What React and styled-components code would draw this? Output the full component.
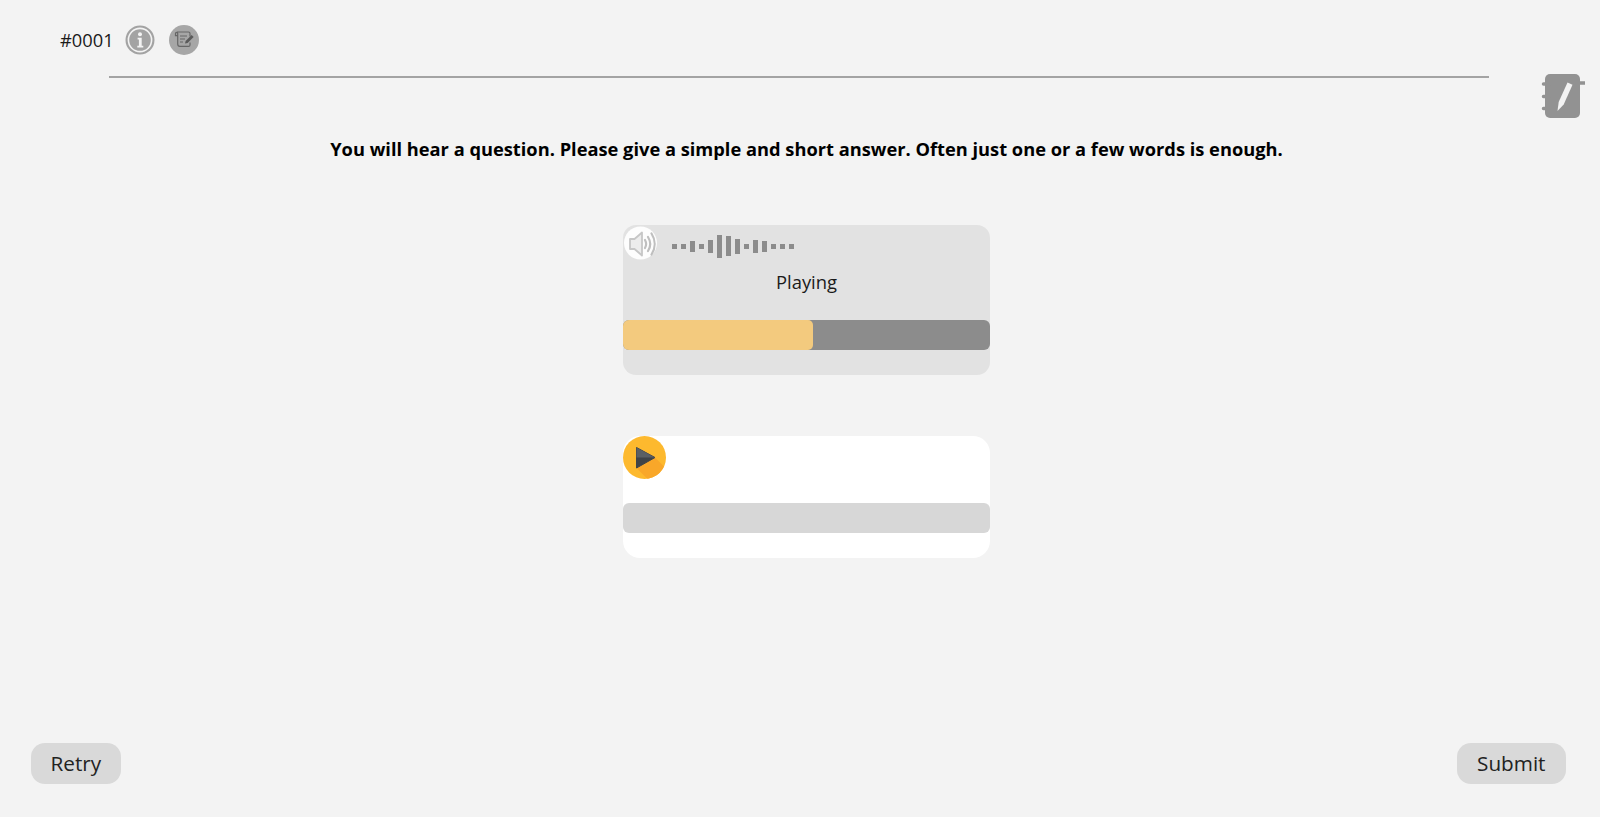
import React from 'react';
import styled, { createGlobalStyle } from 'styled-components';

const GlobalStyle = createGlobalStyle`
  html, body {
    margin: 0;
    padding: 0;
    height: 100%;
    background: #f3f3f3;
    font-family: "Open Sans", "Liberation Sans", sans-serif;
  }
`;

const Page = styled.div`
  position: relative;
  display: flex;
  flex-direction: column;
  height: 100vh;
  overflow: hidden;
  background: #f3f3f3;
  color: #111;
`;

const Header = styled.header`
  display: flex;
  align-items: center;
  height: 80px;
  padding: 0 0 0 60px;
`;

const QuestionId = styled.span`
  font-size: 18.3px;
  line-height: 24px;
  width: 67px;
  padding-bottom: 1px;
  color: #1a1a1a;
  margin-right: -2px;
`;

const HeaderIcon = styled.svg`
  width: 30px;
  height: 30px;
  margin-right: 14px;
`;

const Divider = styled.hr`
  margin: -4px 111px 0 109px;
  border: 0;
  height: 2px;
  background: #a3a3a3;
`;

const NoteIcon = styled.svg`
  position: absolute;
  top: 73px;
  right: 13px;
  width: 46px;
  height: 46px;
`;

const Main = styled.main`
  padding-left: 13px;
`;

const Instruction = styled.h1`
  margin: 58px 0 64px;
  text-align: center;
  font-size: 18.27px;
  line-height: 25px;
  font-weight: 700;
  color: #000;
`;

const Cards = styled.div`
  display: flex;
  flex-direction: column;
  align-items: center;
  gap: 61px;
`;

const Card = styled.section`
  position: relative;
  width: 367px;
  height: ${(p) => p.$height}px;
  box-sizing: border-box;
  padding-top: ${(p) => p.$barTop}px;
  border-radius: ${(p) => p.$radius}px;
  background: ${(p) => p.$bg};
`;

const CardIcon = styled.div`
  position: absolute;
  top: 0;
  left: 0;
  display: flex;
`;

const Wave = styled.div`
  position: absolute;
  left: 49px;
  top: 9px;
  height: 24px;
  display: flex;
  align-items: center;
  gap: 4.2px;
`;

const WaveBar = styled.span`
  width: 4.8px;
  height: ${(p) => p.$h}px;
  background: #8c8c8c;
`;

const Status = styled.div`
  position: absolute;
  top: 44px;
  left: 0;
  right: 0;
  text-align: center;
  font-size: 18.4px;
  line-height: 25px;
  color: #1a1a1a;
`;

const Track = styled.div`
  height: 30px;
  border-radius: 6px;
  overflow: hidden;
  background: ${(p) => p.$bg};
`;

const Fill = styled.div`
  height: 100%;
  border-radius: 0 5px 5px 0;
  background: #f3ca7e;
`;

const Footer = styled.footer`
  margin-top: auto;
  display: flex;
  justify-content: space-between;
  padding: 0 34px 33px 31px;
`;

const ActionButton = styled.button`
  height: 41px;
  padding: 0 ${(p) => p.$pad}px 2px;
  border: 0;
  border-radius: 14px;
  background: #d9d9d9;
  color: #222;
  font-family: inherit;
  font-size: 20.7px;
  cursor: pointer;
`;

const waveHeights = [5, 5, 11, 5, 13, 23, 20, 15, 5, 13, 11, 5, 5, 5];

const InfoGlyph = () => (
  <HeaderIcon viewBox="0 0 30 30">
    <circle cx="15" cy="15" r="14.5" fill="#a3a3a3" />
    <circle cx="15" cy="15" r="11.600" fill="#a3a3a3" stroke="#f3f3f3" strokeWidth="1.6" />
    <circle cx="15" cy="9.2" r="2" fill="#f3f3f3" />
    <path d="M12.6 12.8h4.100v8h1.600v1.600h-6v-1.600h1.600v-6.400h-1.300z" fill="#f3f3f3" />
  </HeaderIcon>
);

const EditGlyph = () => (
  <HeaderIcon viewBox="0 0 30 30">
    <circle cx="15" cy="15" r="15" fill="#a6a6a6" />
    <path
      d="M6.500 8.500c0-1.400 2.200-1.400 2.200 0v2.200H6.500zM8 7h11.500c1 0 1.500.7 1.500 1.500v3M8.700 8v11c0 1.400 1 2.400 2.200 2.400h8.600c1 0 1.500-.7 1.500-1.500v-2.400"
      fill="none"
      stroke="#666666"
      strokeWidth="1.200"
    />
    <path d="M11 11h7M11 14h5M11 17h3" stroke="#666666" strokeWidth="1.100" />
    <path d="M16 18.600l.6-2.600 6-6 2 2-6 6z" fill="#5a5a5a" />
  </HeaderIcon>
);

const NoteGlyph = () => (
  <NoteIcon viewBox="0 0 46 46">
    <rect x="4" y="1" width="35" height="44" rx="5" fill="#929292" />
    <path d="M39 10h5" stroke="#929292" strokeWidth="3.500" />
    <path d="M2.500 11h6M2.500 23.500h6M2.500 35.500h6" stroke="#929292" strokeWidth="3.500" strokeLinecap="round" />
    <path d="M16.500 38l1.200-9L26.500 9.500l5 2.300-8.800 19.700z" fill="#f3f3f3" />
  </NoteIcon>
);

const SpeakerGlyph = () => (
  <svg width="36" height="36" viewBox="0 0 36 36">
    <circle cx="17.500" cy="18" r="16.500" fill="#fdfdfd" />
    <path d="M7 14h4.500L19 7.500v23L11.500 24H7z" fill="#ececec" stroke="#c6c6c6" strokeWidth="1.800" strokeLinejoin="round" />
    <path d="M22 15c1.400 2.500 1.400 5.500 0 8M25 12c2.800 4.400 2.800 9.600 0 14M28.500 8.500c4.200 6.500 4.200 14.500 0 21" fill="none" stroke="#bfbfbf" strokeWidth="2.200" strokeLinecap="round" />
  </svg>
);

const PlayGlyph = () => (
  <svg width="43" height="43" viewBox="0 0 43 43">
    <defs>
      <clipPath id="playDisc">
        <circle cx="21.500" cy="21.500" r="21.500" />
      </clipPath>
    </defs>
    <circle cx="21.500" cy="21.500" r="21.500" fill="#fdb92e" />
    <path d="M32 21.500L13.500 32 24.500 43H43V32.500z" fill="#f9a729" clipPath="url(#playDisc)" />
    <path d="M13.500 11.500L32 21.500 13.500 32z" fill="#3f4347" stroke="#3f4347" strokeLinejoin="round" />
    <path d="M13.500 11.500L32 21.500H13.500z" fill="#5a5f64" />
  </svg>
);

const App = () => (
  <Page>
    <GlobalStyle />
    <Header>
      <QuestionId>#0001</QuestionId>
      <InfoGlyph />
      <EditGlyph />
    </Header>
    <Divider />
    <NoteGlyph />
    <Main>
      <Instruction>
        You will hear a question. Please give a simple and short answer. Often just one or a few words is enough.
      </Instruction>
      <Cards>
        <Card $height={150} $barTop={95} $radius={13} $bg="#e2e2e2">
          <CardIcon>
            <SpeakerGlyph />
          </CardIcon>
          <Wave>
            {waveHeights.map((h, i) => (
              <WaveBar key={i} $h={h} />
            ))}
          </Wave>
          <Status>Playing</Status>
          <Track $bg="#8c8c8c">
            <Fill style={{ width: `${(190 / 367) * 100}%` }} />
          </Track>
        </Card>
        <Card $height={122} $barTop={67} $radius={17} $bg="#ffffff">
          <CardIcon>
            <PlayGlyph />
          </CardIcon>
          <Track $bg="#d7d7d7" />
        </Card>
      </Cards>
    </Main>
    <Footer>
      <ActionButton $pad={19.5}>Retry</ActionButton>
      <ActionButton $pad={20.5}>Submit</ActionButton>
    </Footer>
  </Page>
);

export default App;
